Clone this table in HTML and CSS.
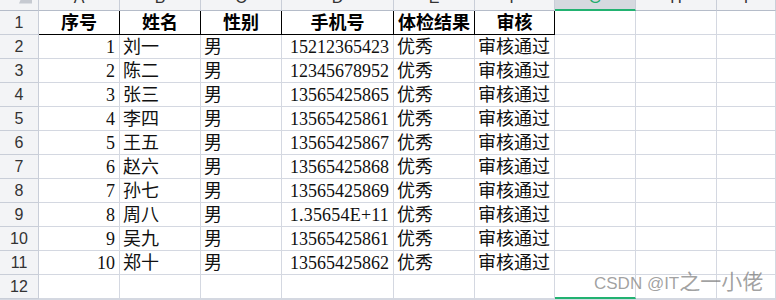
FILE: index.html
```html
<!DOCTYPE html>
<html lang="zh">
<head>
<meta charset="utf-8">
<title>Sheet</title>
<link rel="stylesheet" href="styles.css">
</head>
<body>
<div class="sheet">
  <div class="corner"><svg class="tri" width="39" height="10" viewBox="0 0 39 10"><polygon points="19,3.5 32,3.5 32,0 20.5,0" fill="#c6cad1"/></svg></div>
  <div class="ch"><span>A</span></div>
  <div class="ch"><span>B</span></div>
  <div class="ch"><span>C</span></div>
  <div class="ch"><span>D</span></div>
  <div class="ch"><span>E</span></div>
  <div class="ch"><span>F</span></div>
  <div class="ch sel"><span>G</span></div>
  <div class="ch"><span>H</span></div>
  <div class="ch"><span>I</span></div>

  <div class="rh">1</div>
  <div class="c hd">序号</div><div class="c hd">姓名</div><div class="c hd">性别</div><div class="c hd">手机号</div><div class="c hd">体检结果</div><div class="c hd">审核</div><div class="c"></div><div class="c"></div><div class="c"></div>

  <div class="rh">2</div>
  <div class="c num">1</div><div class="c">刘一</div><div class="c">男</div><div class="c num">15212365423</div><div class="c">优秀</div><div class="c">审核通过</div><div class="c"></div><div class="c"></div><div class="c"></div>

  <div class="rh">3</div>
  <div class="c num">2</div><div class="c">陈二</div><div class="c">男</div><div class="c num">12345678952</div><div class="c">优秀</div><div class="c">审核通过</div><div class="c"></div><div class="c"></div><div class="c"></div>

  <div class="rh">4</div>
  <div class="c num">3</div><div class="c">张三</div><div class="c">男</div><div class="c num">13565425865</div><div class="c">优秀</div><div class="c">审核通过</div><div class="c"></div><div class="c"></div><div class="c"></div>

  <div class="rh">5</div>
  <div class="c num">4</div><div class="c">李四</div><div class="c">男</div><div class="c num">13565425861</div><div class="c">优秀</div><div class="c">审核通过</div><div class="c"></div><div class="c"></div><div class="c"></div>

  <div class="rh">6</div>
  <div class="c num">5</div><div class="c">王五</div><div class="c">男</div><div class="c num">13565425867</div><div class="c">优秀</div><div class="c">审核通过</div><div class="c"></div><div class="c"></div><div class="c"></div>

  <div class="rh">7</div>
  <div class="c num">6</div><div class="c">赵六</div><div class="c">男</div><div class="c num">13565425868</div><div class="c">优秀</div><div class="c">审核通过</div><div class="c"></div><div class="c"></div><div class="c"></div>

  <div class="rh">8</div>
  <div class="c num">7</div><div class="c">孙七</div><div class="c">男</div><div class="c num">13565425869</div><div class="c">优秀</div><div class="c">审核通过</div><div class="c"></div><div class="c"></div><div class="c"></div>

  <div class="rh">9</div>
  <div class="c num">8</div><div class="c">周八</div><div class="c">男</div><div class="c num sci">1.35654E+11</div><div class="c">优秀</div><div class="c">审核通过</div><div class="c"></div><div class="c"></div><div class="c"></div>

  <div class="rh">10</div>
  <div class="c num">9</div><div class="c">吴九</div><div class="c">男</div><div class="c num">13565425861</div><div class="c">优秀</div><div class="c">审核通过</div><div class="c"></div><div class="c"></div><div class="c"></div>

  <div class="rh">11</div>
  <div class="c num">10</div><div class="c">郑十</div><div class="c">男</div><div class="c num">13565425862</div><div class="c">优秀</div><div class="c">审核通过</div><div class="c"></div><div class="c"></div><div class="c"></div>

  <div class="rh">12</div>
  <div class="c"></div><div class="c"></div><div class="c"></div><div class="c"></div><div class="c"></div><div class="c"></div><div class="c selbot"></div><div class="c"></div><div class="c"></div>
</div>
<div class="watermark">CSDN @IT<span class="wm-cjk">之一小佬</span></div>
</body>
</html>
```

FILE: styles.css
```css
html, body {
  margin: 0;
  padding: 0;
  background: #ffffff;
}

body {
  width: 776px;
  height: 300px;
  overflow: hidden;
  position: relative;
}

.sheet {
  display: grid;
  grid-template-columns: 39px 81px 81px 81px 112px 81px 80px 81px 81px 1fr;
  grid-template-rows: 11px repeat(12, 24px);
  width: 776px;
  border-bottom: 1px solid #d4d8e1;
}

.corner,
.ch {
  box-sizing: border-box;
  background: #f3f4f6;
  border-right: 1px solid #c9ced8;
  border-bottom: 1px solid #b5bcc9;
  overflow: hidden;
  height: 11px;
}

.tri {
  display: block;
}

.ch {
  text-align: center;
  font-family: "Liberation Sans", sans-serif;
  font-size: 16px;
  color: #333333;
}

.ch span {
  display: block;
  line-height: 23px;
  margin-top: -14px;
}

.ch.sel {
  background: #d5d9df;
  color: #22ac6c;
  border-bottom: 2px solid #22b271;
}

.rh {
  box-sizing: border-box;
  background: #f3f4f6;
  border-right: 1px solid #c9ced8;
  border-bottom: 1px solid #c9ced8;
  font-family: "Liberation Sans", sans-serif;
  font-size: 16px;
  line-height: 23px;
  text-align: center;
  color: #333333;
}

.c {
  box-sizing: border-box;
  border-right: 1px solid #d4d8e1;
  border-bottom: 1px solid #d4d8e1;
  font-family: "Liberation Serif", "Noto Sans CJK SC", serif;
  font-size: 18px;
  line-height: 23px;
  padding: 1px 3px 0 3px;
  white-space: nowrap;
  overflow: hidden;
  color: #111111;
}

.c.num {
  text-align: right;
  padding-right: 4px;
}

.c.sci {
  letter-spacing: 0.2px;
}

.c.hd {
  font-weight: bold;
  text-align: center;
  color: #000000;
  border-right-color: #000000;
  border-bottom-color: #000000;
}

.c.selbot {
  border-bottom: 2px solid #22b271;
}

.watermark {
  position: absolute;
  left: 594px;
  top: 270px;
  font-family: "Liberation Sans", "Noto Sans CJK SC", sans-serif;
  font-size: 17px;
  line-height: 24px;
  color: rgba(120, 120, 120, 0.7);
  white-space: nowrap;
}

.wm-cjk {
  font-size: 21px;
}
```
